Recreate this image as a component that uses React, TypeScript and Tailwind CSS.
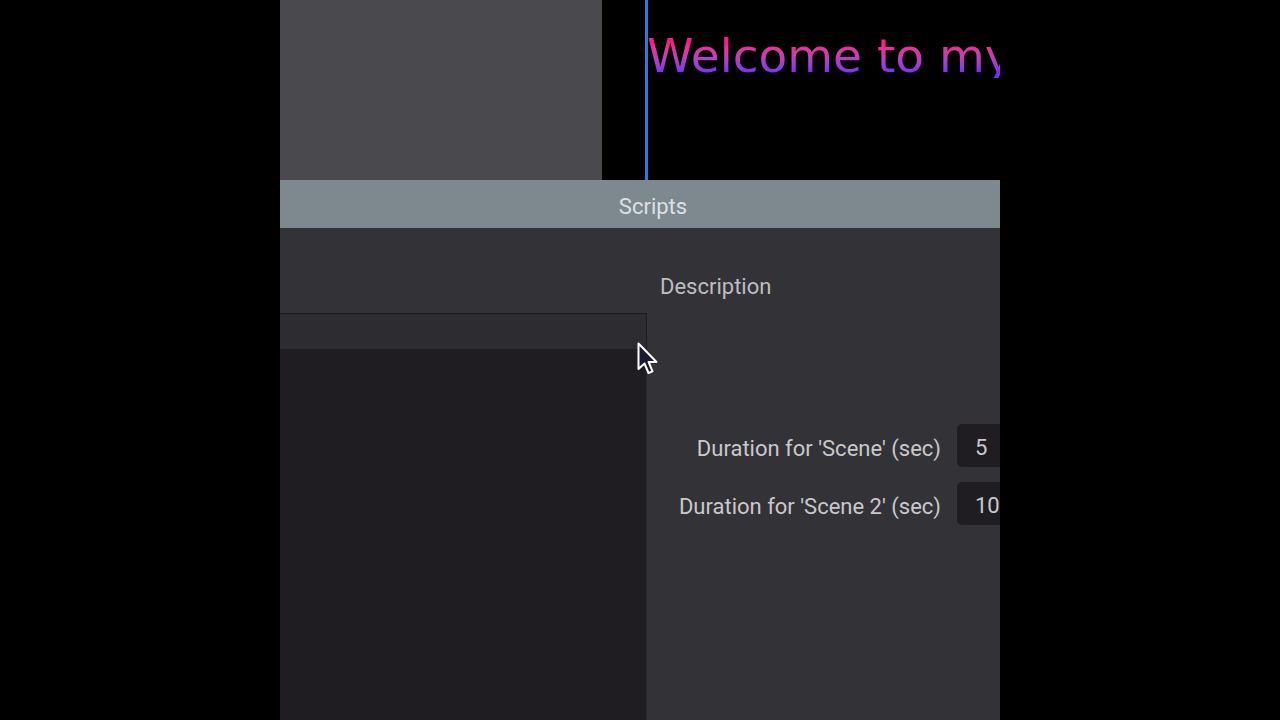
const ui = { fontFamily: "Roboto, 'Noto Sans', sans-serif" };

function Cursor() {
  return (
    <svg
      className="absolute left-[637px] top-[342px]"
      width="22"
      height="34"
      viewBox="0 0 22 34"
    >
      <path
        d="M1.5 1.5 L1.5 27 L7.5 21.5 L11.5 31 L15.5 29.3 L11.6 20 L19.5 20 Z"
        fill="#1b1a33"
        stroke="#ffffff"
        strokeWidth="2"
        strokeLinejoin="round"
      />
    </svg>
  );
}

function DurationRow({ label, value }: { label: string; value: string }) {
  return (
    <div className="flex items-center gap-4">
      <div className="w-[294px] shrink-0 pt-[7px] text-right text-[22px] leading-none text-[#c9c9cb]">{label}</div>
      <div className="flex h-[43px] w-[90px] shrink-0 items-center rounded-[5px] bg-[#1f1d22] pl-[18px] pt-[4px] text-[22px] text-[#c9c9cb]">
        {value}
      </div>
    </div>
  );
}

export default function App() {
  return (
    <div className="relative flex h-[720px] w-[1280px] bg-black" style={ui}>
      <div className="w-[280px] shrink-0 bg-black" />
      <div className="flex w-[720px] shrink-0 flex-col overflow-hidden">
        {/* preview strip */}
        <div className="flex h-[180px] shrink-0">
          <div className="w-[322px] shrink-0 bg-[#4a494d]" />
          <div className="flex flex-1 bg-black pl-[43px]">
            <div className="h-full w-[3px] shrink-0 bg-[#2b7be0]" />
            <div
              className="-ml-[1px] mt-[32px] h-[46px] whitespace-nowrap bg-linear-to-b from-[#fa1c84] from-25% to-[#7a2cf2] to-90% bg-clip-text text-[47px] leading-none text-transparent"
              style={{ fontFamily: "'DejaVu Sans', sans-serif" }}
            >
              Welcome to my
            </div>
          </div>
        </div>

        {/* dock title */}
        <div className="flex h-[48px] shrink-0 items-center justify-center bg-[#7e888f] pl-[26px] pt-[4px] text-[22px] text-[#dde1e4]">
          Scripts
        </div>

        {/* content */}
        <div className="flex flex-1 bg-[#333236]">
          <div className="flex w-[367px] shrink-0 flex-col pt-[85px]">
            <div className="h-[36px] border-t border-r border-[#1c1b1f] bg-[#2d2c30]" />
            <div className="flex-1 border-r border-[#2a292d] bg-[#1f1d21]" />
          </div>
          <div className="flex w-[450px] shrink-0 flex-col">
            <div className="mt-[46px] pl-[13px] text-[22px] leading-[26px] text-[#bebec0]">Description</div>
            <div className="mt-[124px] flex flex-col gap-[15px]">
              <DurationRow label="Duration for 'Scene' (sec)" value="5" />
              <DurationRow label="Duration for 'Scene 2' (sec)" value="10" />
            </div>
          </div>
        </div>
      </div>
      <div className="w-[280px] shrink-0 bg-black" />
      <Cursor />
    </div>
  );
}
